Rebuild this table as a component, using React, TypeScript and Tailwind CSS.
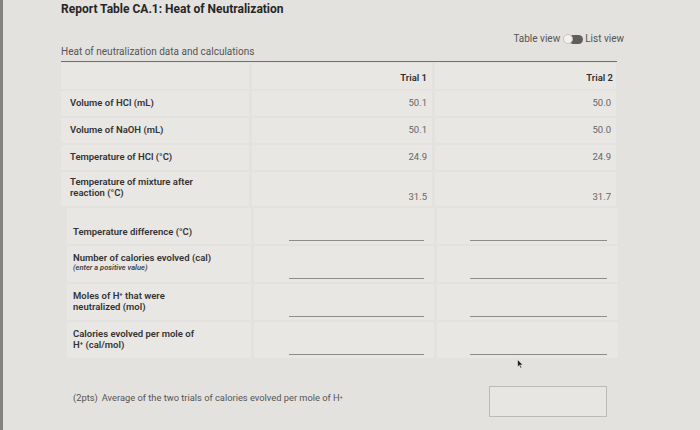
import React from "react";

const upper = [
  { label: "Volume of HCl (mL)", t1: "50.1", t2: "50.0" },
  { label: "Volume of NaOH (mL)", t1: "50.1", t2: "50.0" },
  { label: "Temperature of HCl (°C)", t1: "24.9", t2: "24.9" },
];

function Cell({ children, className = "" }: { children?: React.ReactNode; className?: string }) {
  return <div className={"bg-[#e9e7e3] " + className}>{children}</div>;
}

function Line() {
  return <div className="h-px bg-[#8d8c89]" />;
}

function Blanks() {
  return (
    <>
      <Cell className="h-[36px] flex flex-col justify-end pl-[35px] pr-[10px] pb-[3px]"><Line /></Cell>
      <Cell className="h-[36px] flex flex-col justify-end pl-[33px] pr-[11px] pb-[3px]"><Line /></Cell>
    </>
  );
}

export default function App() {
  return (
    <div
      className="w-[700px] h-[430px] overflow-hidden bg-[#e4e2de] border-l-[3px] border-[#84827e] relative text-[#333]"
      style={{ fontFamily: "Roboto, 'Noto Sans', sans-serif" }}
    >
      <div className="pl-[58px] pt-[1px]">
        <h1 className="text-[12px] font-bold text-[#262626] leading-[16px]">Report Table CA.1: Heat of Neutralization</h1>

        <div className="w-[563px] h-[44px] flex justify-between">
          <div className="self-end text-[10px] text-[#555] leading-[12px] pb-[3px]">Heat of neutralization data and calculations</div>
          <div className="self-start mt-[16px] flex items-center text-[10px] leading-[12px] text-[#555]">
            <span>Table view</span>
            <span className="relative ml-[3px] mr-[2px] w-[20px] h-[10px] inline-flex items-center">
              <span className="absolute right-0 w-[14px] h-[9px] rounded-full bg-[#5f5e5b]" />
              <span className="absolute left-0 w-[10px] h-[10px] rounded-full bg-[#f2f1ee] border border-[#c7c5c1]" />
            </span>
            <span>List view</span>
          </div>
        </div>
        <div className="w-[556px] h-px bg-[#6f6e6b]" />

        <div className="w-[557px] mt-[1px] grid grid-cols-[188px_180px_181px] gap-x-[3px] gap-y-[2px] text-[9.5px]">
          <Cell className="h-[26px]" />
          <Cell className="h-[26px] flex items-center justify-end pr-[5px] pt-[5px] font-semibold text-[#2f2f2f]">Trial 1</Cell>
          <Cell className="h-[26px] flex items-center justify-end pr-[3px] pt-[5px] font-semibold text-[#2f2f2f]">Trial 2</Cell>

          {upper.map((r) => (
            <React.Fragment key={r.label}>
              <Cell className="h-[25px] flex items-center pl-[9px] font-semibold text-[#333]">{r.label}</Cell>
              <Cell className="h-[25px] flex items-center justify-end pr-[5px] text-[#666]">{r.t1}</Cell>
              <Cell className="h-[25px] flex items-center justify-end pr-[5px] text-[#666]">{r.t2}</Cell>
            </React.Fragment>
          ))}

          <Cell className="h-[34px] pl-[9px] pt-[4px] font-semibold text-[#333] leading-[11px]">
            Temperature of mixture after
            <br />
            reaction (°C)
          </Cell>
          <Cell className="h-[34px] flex items-end justify-end pr-[5px] pb-[2px] text-[#666]">31.5</Cell>
          <Cell className="h-[34px] flex items-end justify-end pr-[5px] pb-[2px] text-[#666]">31.7</Cell>
        </div>

        <div className="w-[552px] mt-[2px] ml-[6px] grid grid-cols-[184px_180px_181px] gap-x-[3px] gap-y-[2px] text-[9.5px]">
          <Cell className="h-[36px] flex items-end pl-[6px] pb-[6px] font-semibold text-[#333] leading-[12px]">Temperature difference (°C)</Cell>
          <Blanks />

          <Cell className="h-[36px] pl-[6px] pt-[6px] font-semibold text-[#333] leading-[11px]">
            Number of calories evolved (cal)
            <div className="text-[7.5px] italic font-semibold text-[#444] leading-[10px]">(enter a positive value)</div>
          </Cell>
          <Blanks />

          <Cell className="h-[36px] pl-[6px] pt-[6px] font-semibold text-[#333] leading-[11px]">
            Moles of H<sup className="text-[6px]">+</sup> that were
            <br />
            neutralized (mol)
          </Cell>
          <Blanks />

          <Cell className="h-[36px] pl-[6px] pt-[6px] font-semibold text-[#333] leading-[11px]">
            Calories evolved per mole of
            <br />
            H<sup className="text-[6px]">+</sup> (cal/mol)
          </Cell>
          <Blanks />
        </div>

        <div className="w-[534px] mt-[28px] ml-[12px] flex items-start justify-between">
          <div className="text-[9.3px] leading-[12px] text-[#555] pt-[6px]">
            (2pts)<span className="ml-[4px]">Average of the two trials of calories evolved per mole of H</span>
            <sup className="text-[5px]">+</sup>
          </div>
          <div className="w-[118px] h-[31px] border border-[#bdbbb7] bg-[#e8e6e2]" />
        </div>
      </div>

      <svg className="absolute left-[514px] top-[359px]" width="7" height="10" viewBox="0 0 7 10">
        <path d="M0.5 0.5 L0.5 8 L2.3 6.3 L3.6 9.3 L4.8 8.8 L3.5 5.9 L6 5.9 Z" fill="#222" stroke="#eee" strokeWidth="0.6" />
      </svg>
    </div>
  );
}
